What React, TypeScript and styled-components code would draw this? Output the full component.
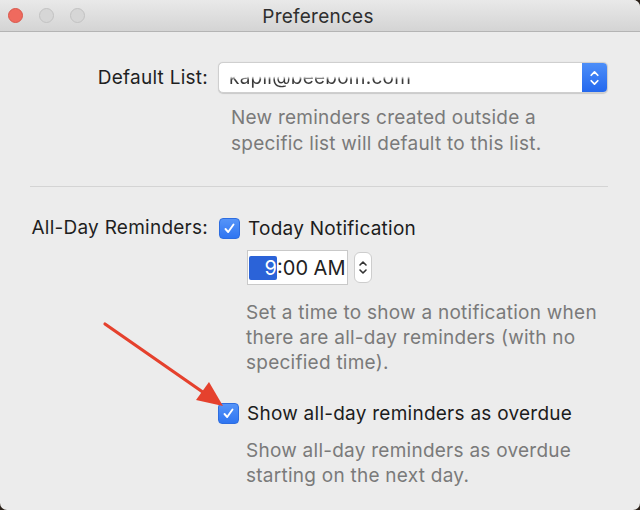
import React from "react";
import styled, { createGlobalStyle } from "styled-components";

const Global = createGlobalStyle`
  html, body { margin: 0; padding: 0; background: #2b2119; }
  body { font-family: Inter, "Noto Sans", "DejaVu Sans", sans-serif; }
  #root { width: 640px; height: 510px; }
`;

const Window = styled.div`
  width: 640px;
  height: 510px;
  background: #ececec;
  border-radius: 0 7px 7px 7px;
  overflow: hidden;
  position: relative;
  display: flex;
  flex-direction: column;
  font-size: 19px;
  letter-spacing: 0.25px;
`;

const TitleBar = styled.div`
  height: 31px;
  flex: none;
  background: linear-gradient(#e9e9e9, #d4d4d4);
  border-bottom: 1px solid #b4b4b4;
  display: grid;
  grid-template-columns: 1fr auto 1fr;
  align-items: center;
  padding: 0 8px;
`;

const Lights = styled.div`
  display: flex;
  gap: 16px;
  align-items: center;
`;

const Light = styled.span<{ $color: string; $border: string }>`
  width: 15px;
  height: 15px;
  border-radius: 50%;
  background: ${(p) => p.$color};
  border: 1px solid ${(p) => p.$border};
  box-sizing: border-box;
`;

const Title = styled.div`
  font-size: 19px;
  color: #2e2e2e;
  padding-top: 1px;
  margin-left: -4px;
`;

const Content = styled.div`
  padding: 30px 32px 0 30px;
  display: grid;
  grid-template-columns: 178px 1fr;
  column-gap: 10px;
  align-items: start;
  color: #1f1f1f;
`;

const Label = styled.div<{ $h: number }>`
  display: flex;
  justify-content: flex-end;
  height: ${(p) => p.$h}px;
  line-height: ${(p) => p.$h}px;
  white-space: nowrap;
`;

const Column = styled.div`
  display: flex;
  flex-direction: column;
  align-items: flex-start;
`;

const Popup = styled.div`
  width: 390px;
  height: 31px;
  box-sizing: border-box;
  background: #fff;
  border: 1px solid #cfcfcf;
  border-radius: 5px;
  display: flex;
  align-items: stretch;
  overflow: hidden;
  box-shadow: 0 0.5px 1px rgba(0, 0, 0, 0.15);
`;

const PopupText = styled.div`
  flex: 1;
  padding-left: 10px;
  line-height: 29px;
  background: linear-gradient(to bottom, rgba(255,255,255,0) 0%, rgba(255,255,255,0) 46%, #3a3a3a 58%, #3a3a3a 100%);
  -webkit-background-clip: text;
  background-clip: text;
  color: transparent;
`;

const PopupArrows = styled.div`
  width: 25px;
  background: linear-gradient(#4d8ef8, #2468ee);
  display: flex;
  align-items: center;
  justify-content: center;
`;

const Help = styled.div<{ $mt: number; $lh: number; $pl: number }>`
  margin-top: ${(p) => p.$mt}px;
  padding-left: ${(p) => p.$pl}px;
  color: #7a7a7a;
  line-height: ${(p) => p.$lh}px;
  white-space: nowrap;
`;

const Separator = styled.div`
  grid-column: 1 / -1;
  height: 1px;
  background: #d4d4d4;
  margin: 29px 0 28px;
`;

const CheckRow = styled.label<{ $mt?: number }>`
  display: flex;
  align-items: center;
  gap: 8px;
  height: 26px;
  margin-top: ${(p) => p.$mt ?? 0}px;
  padding-left: ${(p) => (p.$mt ? 0 : 1)}px;
  color: #1c1c1c;
  white-space: nowrap;
`;

const Check = styled.span`
  width: 21px;
  height: 21px;
  flex: none;
  box-sizing: border-box;
  border-radius: 4px;
  background: linear-gradient(#5594f8, #2f75f1);
  border: 1px solid #2d6de0;
  display: flex;
  align-items: center;
  justify-content: center;
`;

const TimeRow = styled.div`
  display: flex;
  align-items: center;
  gap: 6px;
  margin-top: 9px;
  padding-left: 29px;
`;

const TimeField = styled.div`
  width: 101px;
  height: 35px;
  box-sizing: border-box;
  background: #fff;
  border: 1px solid #c9c9c9;
  display: flex;
  align-items: center;
  padding-left: 1px;
  font-size: 20px;
  letter-spacing: 0;
  color: #222;
`;

const Selected = styled.span`
  width: 28px;
  height: 24px;
  background: #2b63d8;
  color: #fff;
  text-align: right;
  line-height: 24px;
  border-radius: 2px;
`;

const Stepper = styled.div`
  width: 18px;
  height: 31px;
  box-sizing: border-box;
  background: #fff;
  border: 1px solid #cdcdcd;
  border-radius: 6px;
  display: flex;
  align-items: center;
  justify-content: center;
`;

const Arrow = styled.svg`
  position: absolute;
  left: 0;
  top: 0;
  pointer-events: none;
`;

const CheckMark = () => (
  <svg width="13" height="13" viewBox="0 0 13 13">
    <path d="M2.5 7 L5.2 10 L10.5 2.5" fill="none" stroke="#fff" strokeWidth="1.9" strokeLinecap="round" strokeLinejoin="round" />
  </svg>
);

const Chevrons = ({ color, w, h }: { color: string; w: number; h: number }) => (
  <svg width={w} height={h} viewBox="0 0 10 18">
    <path d="M2 6.5 L5 3.5 L8 6.5" fill="none" stroke={color} strokeWidth="1.6" strokeLinecap="round" strokeLinejoin="round" />
    <path d="M2 11.5 L5 14.5 L8 11.5" fill="none" stroke={color} strokeWidth="1.6" strokeLinecap="round" strokeLinejoin="round" />
  </svg>
);

export default function App() {
  return (
    <>
      <Global />
      <Window>
        <TitleBar>
          <Lights>
            <Light $color="#ef6a5e" $border="#d9574b" />
            <Light $color="#d6d6d6" $border="#c2c2c2" />
            <Light $color="#d6d6d6" $border="#c2c2c2" />
          </Lights>
          <Title>Preferences</Title>
          <div />
        </TitleBar>
        <Content>
          <Label $h={31}>Default List:</Label>
          <Column>
            <Popup>
              <PopupText>kapil@beebom.com</PopupText>
              <PopupArrows>
                <Chevrons color="#fff" w={11} h={20} />
              </PopupArrows>
            </Popup>
            <Help $mt={12} $lh={26} $pl={13}>
              New reminders created outside a
              <br />
              specific list will default to this list.
            </Help>
          </Column>
          <Separator />
          <Label $h={26}>All-Day Reminders:</Label>
          <Column>
            <CheckRow>
              <Check>
                <CheckMark />
              </Check>
              Today Notification
            </CheckRow>
            <TimeRow>
              <TimeField>
                <Selected>9</Selected>
                <span>:00 AM</span>
              </TimeField>
              <Stepper>
                <Chevrons color="#333" w={10} h={19} />
              </Stepper>
            </TimeRow>
            <Help $mt={15} $lh={25} $pl={28}>
              Set a time to show a notification when
              <br />
              there are all-day reminders (with no
              <br />
              specified time).
            </Help>
            <CheckRow $mt={25}>
              <Check>
                <CheckMark />
              </Check>
              Show all-day reminders as overdue
            </CheckRow>
            <Help $mt={12} $lh={25} $pl={28}>
              Show all-day reminders as overdue
              <br />
              starting on the next day.
            </Help>
          </Column>
        </Content>
        <Arrow width="640" height="510" viewBox="0 0 640 510">
          <line x1="105" y1="324" x2="207" y2="395" stroke="#e5412d" strokeWidth="3.2" strokeLinecap="round" />
          <polygon points="223,406 196,400 209,382" fill="#e5412d" />
        </Arrow>
      </Window>
    </>
  );
}
